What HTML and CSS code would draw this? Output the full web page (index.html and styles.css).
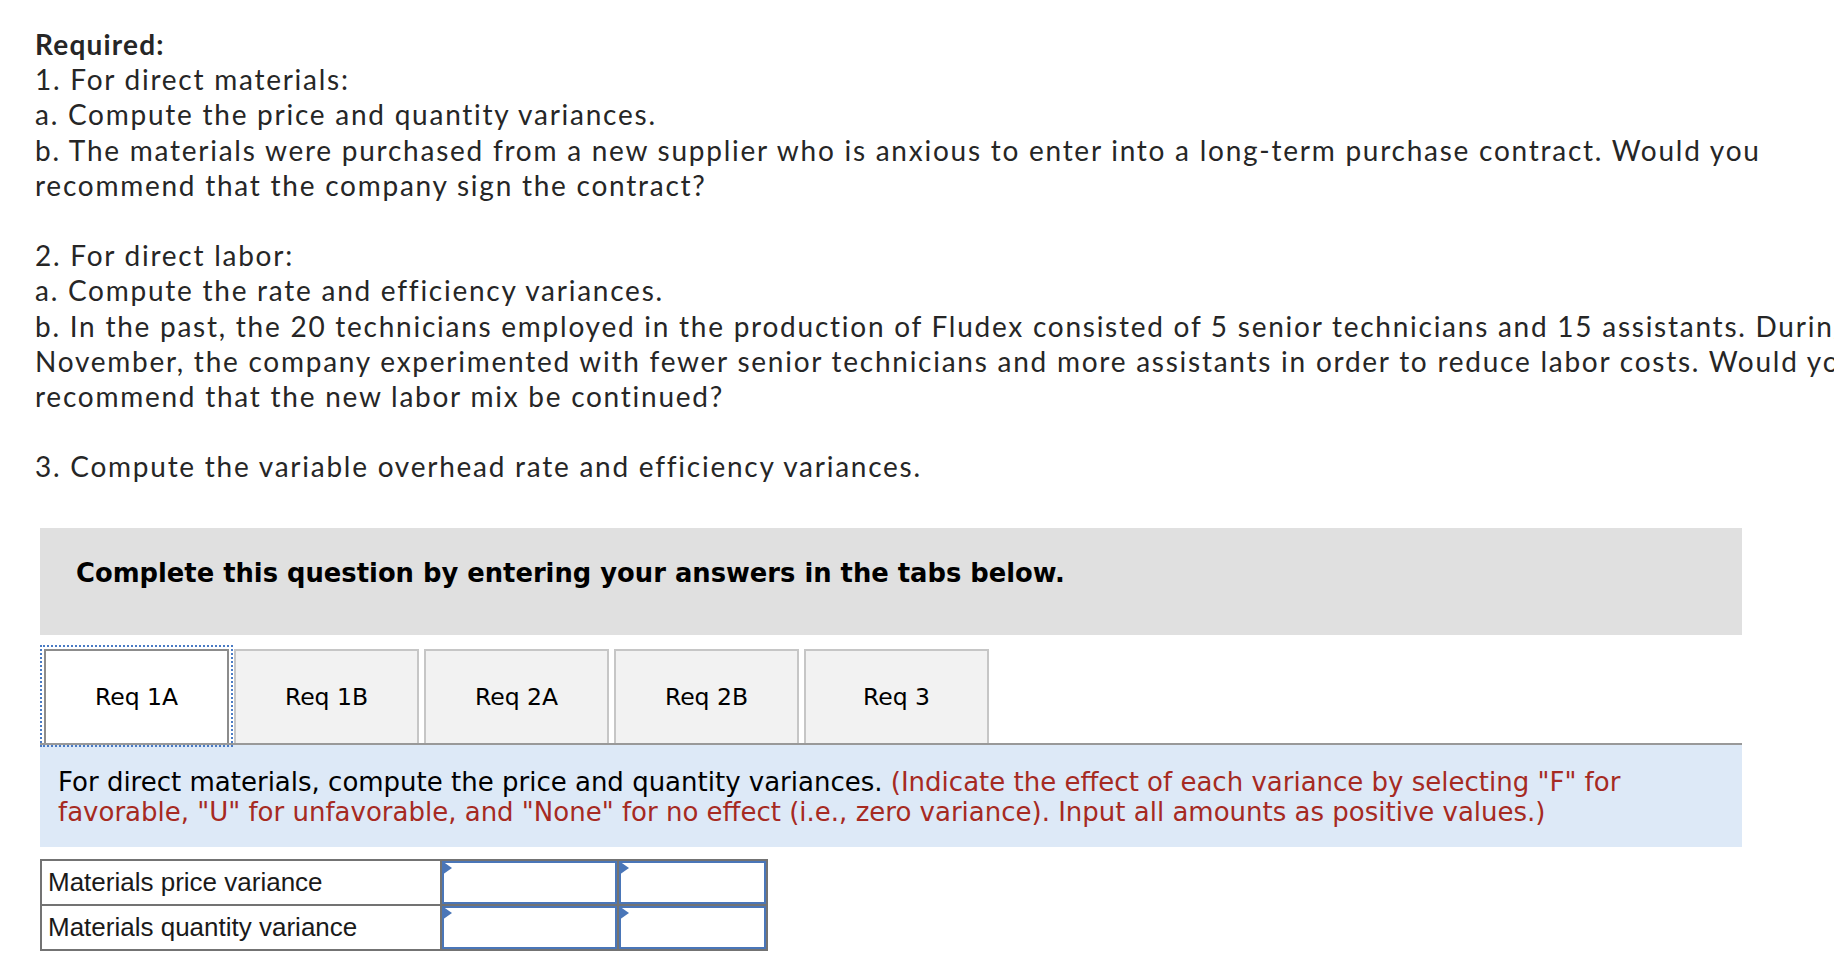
FILE: index.html
```html
<!DOCTYPE html>
<html lang="en">
<head>
<meta charset="utf-8">
<title>Required</title>
<link rel="stylesheet" href="styles.css">
</head>
<body>
<div class="page">
  <p class="req"><strong>Required:</strong><br>1. For direct materials:<br>a. Compute the price and quantity variances.<br>b. The materials were purchased from a new supplier who is anxious to enter into a long-term purchase contract. Would you<br>recommend that the company sign the contract?<br><br>2. For direct labor:<br>a. Compute the rate and efficiency variances.<br>b. In the past, the 20 technicians employed in the production of Fludex consisted of 5 senior technicians and 15 assistants. During<br>November, the company experimented with fewer senior technicians and more assistants in order to reduce labor costs. Would you<br>recommend that the new labor mix be continued?<br><br>3. Compute the variable overhead rate and efficiency variances.</p>

  <section class="panel">
    <div class="panel-head">Complete this question by entering your answers in the tabs below.</div>
    <div class="tabs">
      <div class="tab active">Req 1A</div>
      <div class="tab">Req 1B</div>
      <div class="tab">Req 2A</div>
      <div class="tab">Req 2B</div>
      <div class="tab">Req 3</div>
    </div>
    <div class="instructions">For direct materials, compute the price and quantity variances. <span class="note">(Indicate the effect of each variance by selecting "F" for<br>favorable, "U" for unfavorable, and "None" for no effect (i.e., zero variance). Input all amounts as positive values.)</span></div>
    <table class="answer">
      <tr class="row-first">
        <td class="label">Materials price variance</td>
        <td class="amount"><div class="field"></div></td>
        <td class="effect"><div class="field"></div></td>
      </tr>
      <tr>
        <td class="label">Materials quantity variance</td>
        <td class="amount"><div class="field"></div></td>
        <td class="effect"><div class="field"></div></td>
      </tr>
    </table>
  </section>
</div>
</body>
</html>
```
FILE: styles.css
```css
html, body {
  margin: 0;
  padding: 0;
  background: #ffffff;
  overflow: hidden;
}

.page {
  padding-top: 27px;
}

.req {
  margin: 0 0 0 35px;
  font-family: Lato, "Open Sans", sans-serif;
  font-size: 28px;
  line-height: 35.2px;
  letter-spacing: 1.75px;
  color: #262626;
  white-space: nowrap;
}

.req strong {
  font-weight: 700;
  letter-spacing: 1.2px;
}

.panel {
  margin: 43px 0 0 40px;
  width: 1702px;
}

.panel-head {
  background: #e0e0e0;
  height: 107px;
  box-sizing: border-box;
  padding: 30px 0 0 36px;
  font-family: "DejaVu Sans", Verdana, sans-serif;
  font-weight: 700;
  font-size: 25.8px;
  line-height: 30px;
  color: #000000;
}

.tabs {
  display: flex;
  gap: 5px;
  margin-top: 14px;
  padding-left: 4px;
  border-bottom: 2px solid #999999;
}

.tab {
  width: 185px;
  height: 94px;
  box-sizing: border-box;
  border: 2px solid #c6c6c6;
  border-bottom: none;
  background: #f2f2f2;
  display: flex;
  align-items: center;
  justify-content: center;
  font-family: "DejaVu Sans", Verdana, sans-serif;
  font-size: 23.5px;
  color: #000000;
}

.tab.active {
  background: #ffffff;
  border-color: #8c8c8c;
  outline: 2px dotted #4a7bc4;
  outline-offset: 2px;
}

.instructions {
  background: #dde9f7;
  padding: 22px 18px 20px;
  font-family: "DejaVu Sans", Verdana, sans-serif;
  font-size: 26px;
  line-height: 30px;
  color: #000000;
  white-space: nowrap;
}

.note {
  color: #a62a22;
}

.answer {
  margin-top: 12px;
  border-collapse: separate;
  border-spacing: 0;
  border: 2px solid #737373;
}

.answer td {
  padding: 0;
  height: 43px;
  box-sizing: border-box;
  vertical-align: middle;
}

.row-first td {
  border-bottom: 2px solid #737373;
}

.label {
  width: 400px;
  padding-left: 6px !important;
  border-right: 2px solid #737373;
  font-family: "Liberation Sans", Arial, sans-serif;
  font-size: 26px;
  color: #1a1a1a;
}

.amount {
  width: 177px;
  border-right: 2px solid #737373;
}

.effect {
  width: 147px;
}

.field {
  position: relative;
  height: 43px;
  box-sizing: border-box;
  border: 2px solid #4a76b8;
  background: #ffffff;
}

.field::before {
  content: "";
  position: absolute;
  left: -2px;
  top: -2px;
  width: 0;
  height: 0;
  border-left: 10px solid #4a76b8;
  border-top: 7px solid transparent;
  border-bottom: 7px solid transparent;
}
```
